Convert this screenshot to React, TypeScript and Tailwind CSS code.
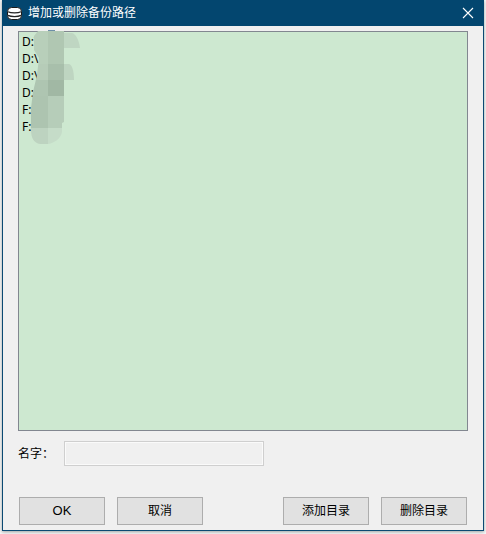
const smudge = [
  { x: 30, y: 30, w: 18, h: 34, fill: "#b8cfba" },
  { x: 48, y: 30, w: 16, h: 34, fill: "#b0c7b2" },
  { x: 64, y: 30, w: 18, h: 34, fill: "#bfd6c2" },
  { x: 30, y: 64, w: 18, h: 16, fill: "#b6ccb8" },
  { x: 48, y: 64, w: 16, h: 16, fill: "#a8bfab" },
  { x: 64, y: 64, w: 18, h: 16, fill: "#bed5c1" },
  { x: 30, y: 80, w: 18, h: 16, fill: "#aec5b1" },
  { x: 48, y: 80, w: 16, h: 16, fill: "#a1b8a4" },
  { x: 30, y: 96, w: 18, h: 32, fill: "#adc4b0" },
  { x: 48, y: 96, w: 16, h: 32, fill: "#b6cdb9" },
  { x: 30, y: 128, w: 18, h: 16, fill: "#bdd3c0" },
  { x: 48, y: 128, w: 16, h: 16, fill: "#c5dcc8" },
];

// outline of the blurred-out part of the paths
const smudgeOutline =
  "M38 31H64V33H72C76 34 79 40 80 48H64V64H69C72 65 74 70 74 80H64V96H64V122L62 123V132C61 138 55 143 48 144H40C34 143 31 138 31 130V108L33 92L37 75L39 58L34 50V36Z";

const paths = ["D:\\", "D:\\", "D:\\", "D:", "F:", "F:"];

function DialogButton({ label, size = "text-[12px]" }: { label: string; size?: string }) {
  return (
    <button className={`h-7 w-[86px] border border-[#adadad] bg-[#e1e1e1] text-black ${size}`}>
      {label}
    </button>
  );
}

export default function App() {
  return (
    <div
      className="h-[534px] w-[486px] bg-[#f4f6f6] pb-[3px] pl-[2px] pr-[2px] text-black"
      style={{ fontFamily: '"Liberation Sans", "Noto Sans CJK SC", sans-serif' }}
    >
      <div className="flex h-full w-full flex-col border-x border-b border-[#0b4a73] bg-[#f0f0f0] shadow-[0_1px_3px_rgba(0,0,0,0.35)]">
        {/* title bar */}
        <div className="-mx-px flex h-[26px] shrink-0 items-center bg-[#03466f] pl-[5px] pr-[10px] text-white">
          <svg width="15" height="13" viewBox="0 0 15 13" className="shrink-0">
            <rect x="0.5" y="0.5" width="14" height="12" rx="4" fill="#fff" stroke="#1b1b1b" />
            <path d="M1 4.8c3 1.5 10 1.5 13 0M1 8.4c3 1.5 10 1.5 13 0" fill="none" stroke="#222" strokeWidth="1.2" />
          </svg>
          <span className="ml-[6px] text-[12px] leading-none">增加或删除备份路径</span>
          <svg width="12" height="12" viewBox="0 0 12 12" className="ml-auto">
            <path d="M1 1l10 10M11 1L1 11" stroke="#fff" strokeWidth="1.1" fill="none" />
          </svg>
        </div>

        <div className="flex min-h-0 flex-1 flex-col pl-[15px] pr-[15px]">
          {/* path list */}
          <div className="relative mt-[5px] h-[400px] w-[450px] shrink-0 border border-[#828790] bg-[#cde8d0] px-[3px] pt-px font-['Noto_Sans'] text-[12px] leading-[17px]">
            {paths.map((path, index) => (
              <div key={index}>{path}</div>
            ))}
            <svg
              width="82"
              height="144"
              viewBox="0 0 82 144"
              className="absolute -left-[19px] -top-[32px]"
            >
              <defs>
                <clipPath id="smudge-outline">
                  <path d={smudgeOutline} />
                </clipPath>
              </defs>
              <rect x="48" y="30" width="7" height="2" fill="#6d8fa8" />
              <g clipPath="url(#smudge-outline)">
                {smudge.map((block, index) => (
                  <rect key={index} x={block.x} y={block.y} width={block.w} height={block.h} fill={block.fill} />
                ))}
              </g>
            </svg>
          </div>

          {/* name field */}
          <div className="mt-[10px] -ml-px flex h-[25px] shrink-0 items-center">
            <span className="ml-px w-[46px] shrink-0 text-[12px]">名字：</span>
            <div className="h-[25px] w-[200px] border border-[#cfcfcf] bg-[#f0f0f0] shadow-[inset_0_0_0_1px_#fafafa]" />
          </div>

          {/* buttons */}
          <div className="mt-[31px] flex">
            <div className="ml-px flex gap-[12px]">
              <DialogButton label="OK" size="text-[13px]" />
              <DialogButton label="取消" />
            </div>
            <div className="ml-[80px] flex gap-[12px]">
              <DialogButton label="添加目录" />
              <DialogButton label="删除目录" />
            </div>
          </div>
        </div>
      </div>
    </div>
  );
}
